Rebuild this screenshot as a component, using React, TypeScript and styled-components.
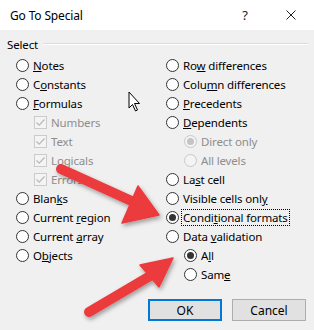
import React from "react";
import styled, { createGlobalStyle, css } from "styled-components";

const Global = createGlobalStyle`
  html, body { margin: 0; padding: 0; background: #f0f0f0; }
  body { font-family: "Segoe UI", "Noto Sans", "Liberation Sans", sans-serif; }
`;

const Dialog = styled.div`
  position: relative;
  width: 314px;
  height: 330px;
  background: #f0f0f0;
  color: #000;
  font-size: 11.5px;
  letter-spacing: -0.15px;
  overflow: hidden;
`;

const TitleBar = styled.div`
  height: 30px;
  background: #fff;
  display: flex;
  align-items: center;
  padding-left: 10px;
  font-size: 12px;
`;

const Title = styled.div`
  flex: 1;
`;

const TitleButton = styled.div`
  width: 46px;
  height: 30px;
  display: flex;
  align-items: center;
  justify-content: center;
  font-size: 13px;
  color: #222;
`;

const Body = styled.div`
  padding: 6px 6px 0 7px;
`;

const GroupHeader = styled.div`
  display: flex;
  align-items: center;
  height: 16px;
  gap: 5px;
`;

const GroupLine = styled.div`
  flex: 1;
  height: 1px;
  background: #dcdcdc;
  border-bottom: 1px solid #fff;
`;

const Columns = styled.div`
  display: grid;
  grid-template-columns: 150px 1fr;
  padding: 4px 0 0 9px;
`;

const Column = styled.div`
  display: flex;
  flex-direction: column;
`;

const Row = styled.div<{ $indent?: boolean; $disabled?: boolean }>`
  height: 19px;
  display: flex;
  align-items: center;
  gap: 4px;
  padding-left: ${(p) => (p.$indent ? "18px" : "0")};
  color: ${(p) => (p.$disabled ? "#8d8d8d" : "#000")};
  white-space: nowrap;
`;

const RadioCircle = styled.span<{ $checked?: boolean; $disabled?: boolean }>`
  width: 13px;
  height: 13px;
  box-sizing: border-box;
  border-radius: 50%;
  border: 1px solid ${(p) => (p.$disabled ? "#c8c8c8" : "#333")};
  background: ${(p) => (p.$disabled ? "#f4f4f4" : "#fff")};
  display: flex;
  align-items: center;
  justify-content: center;
  flex: none;
  ${(p) =>
    p.$checked &&
    css`
      &::after {
        content: "";
        width: 7px;
        height: 7px;
        border-radius: 50%;
        background: ${p.$disabled ? "#c4c4c4" : "#333"};
      }
    `}
`;

const CheckBox = styled.span`
  width: 13px;
  height: 13px;
  box-sizing: border-box;
  border: 1px solid #cbcbcb;
  background: #f4f4f4;
  flex: none;
  display: flex;
  align-items: center;
  justify-content: center;
`;

const Label = styled.span<{ $focus?: boolean }>`
  line-height: 15px;
  padding: 0 1px;
  border: 1px dotted ${(p) => (p.$focus ? "#000" : "transparent")};
  margin-left: -2px;
  u {
    text-decoration: underline;
    text-underline-offset: 1px;
  }
`;

const ButtonRow = styled.div`
  position: absolute;
  right: 8px;
  top: 299px;
  display: flex;
  gap: 10px;
`;

const Button = styled.button<{ $default?: boolean }>`
  width: 74px;
  height: 22px;
  box-sizing: border-box;
  font-family: inherit;
  font-size: 12px;
  color: #000;
  background: #e1e1e1;
  border: ${(p) => (p.$default ? "2px solid #0078d7" : "1px solid #adadad")};
  padding: 0;
`;

const Overlay = styled.svg`
  position: absolute;
  left: 0;
  top: 0;
  pointer-events: none;
`;

type Item = {
  kind: "radio" | "check";
  label: React.ReactNode;
  checked?: boolean;
  disabled?: boolean;
  indent?: boolean;
  focus?: boolean;
};

const left: Item[] = [
  { kind: "radio", label: <><u>N</u>otes</> },
  { kind: "radio", label: <>C<u>o</u>nstants</> },
  { kind: "radio", label: <><u>F</u>ormulas</> },
  { kind: "check", label: "Numbers", checked: true, disabled: true, indent: true },
  { kind: "check", label: "Text", checked: true, disabled: true, indent: true },
  { kind: "check", label: "Logicals", checked: true, disabled: true, indent: true },
  { kind: "check", label: "Errors", checked: true, disabled: true, indent: true },
  { kind: "radio", label: <>Blan<u>k</u>s</> },
  { kind: "radio", label: <>Current <u>r</u>egion</> },
  { kind: "radio", label: <>Current <u>a</u>rray</> },
  { kind: "radio", label: <>O<u>b</u>jects</> },
];

const right: Item[] = [
  { kind: "radio", label: <>Ro<u>w</u> differences</> },
  { kind: "radio", label: <>Colu<u>m</u>n differences</> },
  { kind: "radio", label: <><u>P</u>recedents</> },
  { kind: "radio", label: <><u>D</u>ependents</> },
  { kind: "radio", label: "Direct only", checked: true, disabled: true, indent: true },
  { kind: "radio", label: "All levels", disabled: true, indent: true },
  { kind: "radio", label: <>La<u>s</u>t cell</> },
  { kind: "radio", label: <>Visible cells onl<u>y</u></> },
  { kind: "radio", label: <>Condi<u>t</u>ional formats</>, checked: true, focus: true },
  { kind: "radio", label: <>Data <u>v</u>alidation</> },
  { kind: "radio", label: <>A<u>l</u>l</>, checked: true, indent: true },
  { kind: "radio", label: <>Sam<u>e</u></>, indent: true },
];

const Check = () => (
  <svg width="11" height="11" viewBox="0 0 11 11">
    <path d="M1.5 5.5 L4.2 8.2 L9.5 2.5" fill="none" stroke="#b8b8b8" strokeWidth="1.2" />
  </svg>
);

const renderItem = (it: Item, i: number) => (
  <Row key={i} $indent={it.indent} $disabled={it.disabled}>
    {it.kind === "radio" ? (
      <RadioCircle $checked={it.checked} $disabled={it.disabled} />
    ) : (
      <CheckBox>{it.checked && <Check />}</CheckBox>
    )}
    <Label $focus={it.focus}>{it.label}</Label>
  </Row>
);

export default function App() {
  return (
    <>
      <Global />
      <Dialog>
        <TitleBar>
          <Title>Go To Special</Title>
          <TitleButton>?</TitleButton>
          <TitleButton>
            <svg width="10" height="10" viewBox="0 0 10 10">
              <path d="M0.5 0.5 L9.5 9.5 M9.5 0.5 L0.5 9.5" stroke="#222" strokeWidth="1" />
            </svg>
          </TitleButton>
        </TitleBar>
        <Body>
          <GroupHeader>
            <span>Select</span>
            <GroupLine />
          </GroupHeader>
          <Columns>
            <Column>{left.map(renderItem)}</Column>
            <Column>{right.map(renderItem)}</Column>
          </Columns>
        </Body>
        <ButtonRow>
          <Button $default>OK</Button>
          <Button>Cancel</Button>
        </ButtonRow>

        <Overlay width="314" height="330" viewBox="0 0 314 330">
          <defs>
            <filter id="sh" x="-20%" y="-20%" width="140%" height="140%">
              <feDropShadow dx="1.5" dy="2.5" stdDeviation="2" floodColor="#000" floodOpacity="0.35" />
            </filter>
          </defs>
          {/* cursor */}
          <path
            d="M129 92 L129 108 L132.5 104.5 L135.5 111 L137.5 110 L134.5 103.5 L139.5 103.5 Z"
            fill="#fff"
            stroke="#000"
            strokeWidth="1"
            strokeLinejoin="round"
          />
          <g filter="url(#sh)" fill="#ec3a3c" stroke="#ec3a3c">
            <line x1="61" y1="169" x2="136" y2="203" strokeWidth="10" strokeLinecap="round" />
            <polygon points="138,186 159,215 122,223" strokeWidth="1.5" strokeLinejoin="round" />
          </g>
          <g filter="url(#sh)" fill="#ec3a3c" stroke="#ec3a3c">
            <line x1="89" y1="312" x2="150" y2="276" strokeWidth="10" strokeLinecap="round" />
            <polygon points="140,265 173,258 159,287" strokeWidth="1.5" strokeLinejoin="round" />
          </g>
        </Overlay>
      </Dialog>
    </>
  );
}
